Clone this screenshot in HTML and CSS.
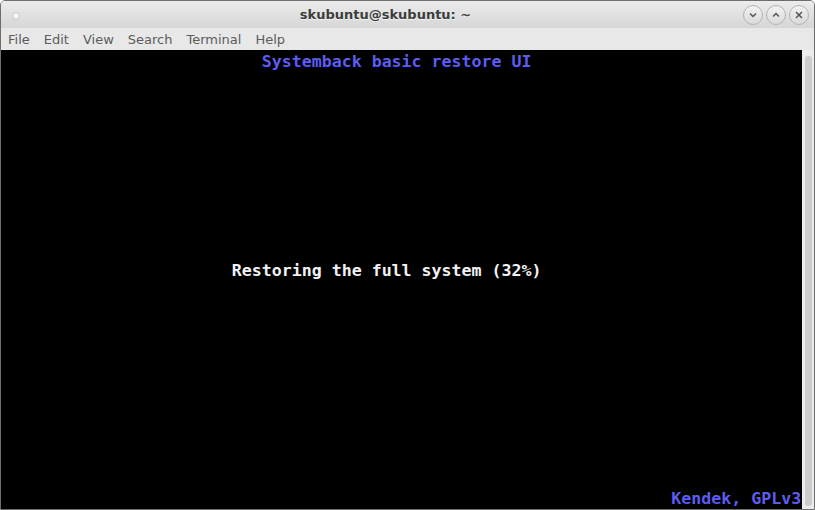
FILE: index.html
```html
<!DOCTYPE html>
<html lang="en">
<head>
  <meta charset="UTF-8">
  <meta name="viewport" content="width=device-width, initial-scale=1.0">
  <title>skubuntu@skubuntu: ~</title>
  <link rel="stylesheet" href="styles.css">
</head>

<body>
  <div class="window">
    <div class="titlebar">
      <span class="app-dot"></span>
      <span class="title">skubuntu@skubuntu: ~</span>
      <div class="controls">
        <button class="ctl">
          <svg width="8" height="6" viewBox="0 0 8 6"><path d="M1 1.5 L4 4.5 L7 1.5" fill="none" stroke="#555" stroke-width="1.5"/></svg>
        </button>
        <button class="ctl">
          <svg width="8" height="6" viewBox="0 0 8 6"><path d="M1 4.5 L4 1.5 L7 4.5" fill="none" stroke="#555" stroke-width="1.5"/></svg>
        </button>
        <button class="ctl">
          <svg width="8" height="8" viewBox="0 0 8 8"><path d="M1 1 L7 7 M7 1 L1 7" fill="none" stroke="#555" stroke-width="1.5"/></svg>
        </button>
      </div>
    </div>

    <ul class="menubar">
      <li>File</li>
      <li>Edit</li>
      <li>View</li>
      <li>Search</li>
      <li>Terminal</li>
      <li>Help</li>
    </ul>

    <div class="terminal">
      <pre class="screen"><span class="blue">                          Systemback basic restore UI</span>










<span class="white">                       Restoring the full system (32%)</span>











<span class="blue">                                                                   Kendek, GPLv3</span></pre>
      <div class="scrollbar">
        <div class="thumb"></div>
      </div>
    </div>
  </div>
</body>
</html>
```

FILE: styles.css
```css
* {
  box-sizing: border-box;
}

body {
  margin: 0;
  background: #fff;
  font-family: "DejaVu Sans", sans-serif;
}

.window {
  width: 815px;
  height: 510px;
  border: 1px solid #6e6e6e;
  border-radius: 5px 5px 0 0;
  overflow: hidden;
  display: flex;
  flex-direction: column;
}

/* title bar */
.titlebar {
  position: relative;
  height: 27px;
  flex: none;
  display: flex;
  align-items: center;
  justify-content: center;
  background: linear-gradient(#ececec, #d6d6d6);
}

.app-dot {
  position: absolute;
  left: 11px;
  top: 11px;
  width: 8px;
  height: 8px;
  border-radius: 50%;
  background: #f4f4f4;
  border: 1px solid #c4c4c4;
}

.title {
  font-size: 13px;
  font-weight: bold;
  color: #3c3c3c;
  text-shadow: 0 1px 0 rgba(255, 255, 255, 0.6);
  margin: -1px 44px 0 0;
}

.controls {
  position: absolute;
  right: 5px;
  top: 4px;
  display: flex;
  gap: 3px;
}

.ctl {
  width: 20px;
  height: 20px;
  padding: 0;
  border-radius: 50%;
  border: 1px solid #b4b4b4;
  background: linear-gradient(#f2f2f2, #dadada);
  display: flex;
  align-items: center;
  justify-content: center;
}

/* menu bar */
.menubar {
  list-style: none;
  margin: 0;
  padding: 0 0 0 7px;
  height: 22px;
  flex: none;
  display: flex;
  align-items: center;
  gap: 14px;
  background: #e8e8e8;
  font-size: 13px;
  color: #5c5c5c;
}

/* terminal */
.terminal {
  flex: 1;
  display: flex;
  min-height: 0;
}

.screen {
  flex: 1;
  margin: 0;
  padding: 2px 0 0 1px;
  background: #000;
  font-family: "DejaVu Sans Mono", monospace;
  font-size: 16.6px;
  font-weight: bold;
  line-height: 19px;
  overflow: hidden;
}

.blue {
  color: #5c5cf0;
}

.white {
  color: #f2f2f2;
}

.scrollbar {
  width: 12px;
  flex: none;
  background: #ececec;
  padding: 6px 2px 3px 3px;
}

.thumb {
  height: 100%;
  border-radius: 3px;
  background: #cdcdcd;
}
```
